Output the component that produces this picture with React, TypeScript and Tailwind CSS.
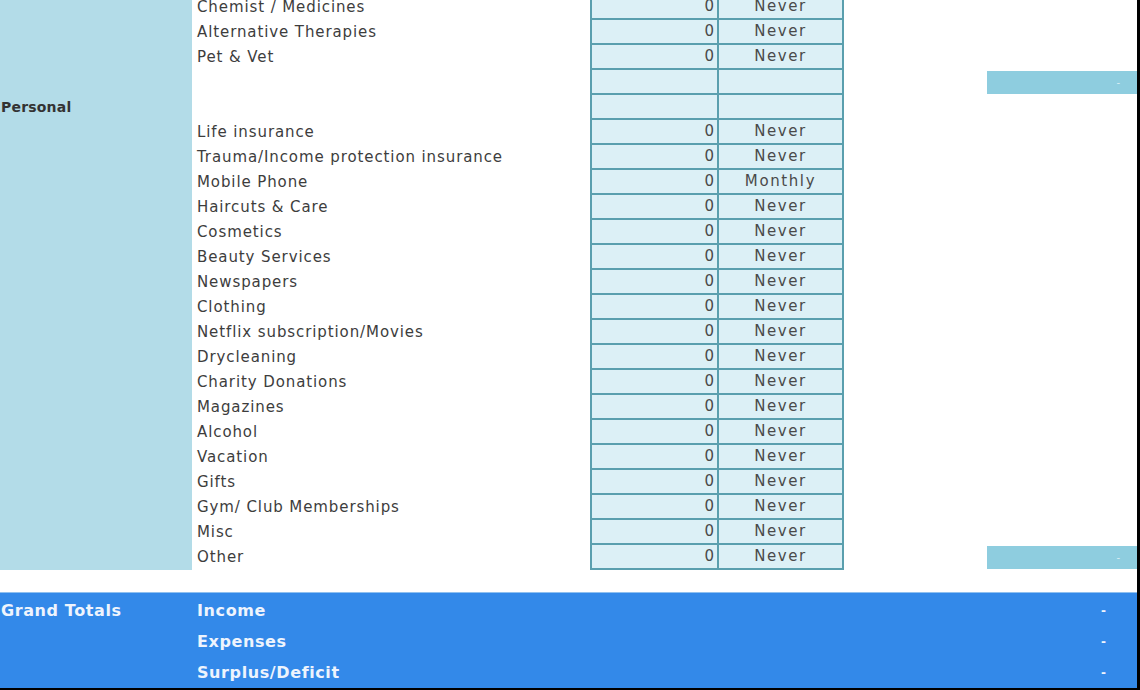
import React from "react";

const rows: (null | [string, string])[] = [
  ["Chemist / Medicines", "Never"],
  ["Alternative Therapies", "Never"],
  ["Pet & Vet", "Never"],
  null,
  null,
  ["Life insurance", "Never"],
  ["Trauma/Income protection insurance", "Never"],
  ["Mobile Phone", "Monthly"],
  ["Haircuts & Care", "Never"],
  ["Cosmetics", "Never"],
  ["Beauty Services", "Never"],
  ["Newspapers", "Never"],
  ["Clothing", "Never"],
  ["Netflix subscription/Movies", "Never"],
  ["Drycleaning", "Never"],
  ["Charity Donations", "Never"],
  ["Magazines", "Never"],
  ["Alcohol", "Never"],
  ["Vacation", "Never"],
  ["Gifts", "Never"],
  ["Gym/ Club Memberships", "Never"],
  ["Misc", "Never"],
  ["Other", "Never"],
];

const font = { fontFamily: '"DejaVu Sans", "Liberation Sans", sans-serif' };

export default function App() {
  return (
    <div
      className="w-[1140px] h-[690px] bg-white overflow-hidden border-r-[3px] border-b-[2px] border-black flex flex-col"
      style={font}
    >
      <div className="mt-[-5px] flex flex-col">
        {rows.map((r, i) => (
          <div key={i} className="flex h-[25px] items-stretch">
            <div className="w-[192px] bg-[#b3dce8] flex items-center text-[14px] font-bold text-[#333] tracking-[0.2px] pl-[1px]">
              {i === 4 ? "Personal" : ""}
            </div>
            <div className="w-[398px] pl-[5px] flex items-center text-[15px] text-[#3d3d3d] tracking-[0.9px] whitespace-nowrap">
              {r ? r[0] : ""}
            </div>
            <div className="w-[127px] bg-[#dcf0f6] border-l-2 border-b-2 border-[#5a9fae] flex items-center justify-end pr-[3px] text-[15px] text-[#4a4a4a]">
              {r ? "0" : ""}
            </div>
            <div className="w-[127px] bg-[#dcf0f6] border-l-2 border-r-2 border-b-2 border-[#5a9fae] flex items-center justify-center text-[15px] tracking-[1.6px] text-[#4a4a4a]">
              {r ? r[1] : ""}
            </div>
            <div className="w-[143px]" />
            <div className="w-[150px] flex items-stretch py-[1px]">
              {i === 3 || i === 22 ? (
                <div className="flex-1 bg-[#8ecddf] flex items-center justify-end pr-[17px] text-[10px] text-[#d8eef4]">
                  -
                </div>
              ) : null}
            </div>
          </div>
        ))}
      </div>
      <div className="h-[25px]" />
      <div className="flex-1 bg-[#3389e9] border-t border-[#8fc0f0] pt-[2px] text-[#eef4fd] font-bold text-[16px] tracking-[0.6px]">
        {[
          ["Grand Totals", "Income"],
          ["", "Expenses"],
          ["", "Surplus/Deficit"],
        ].map(([a, b], i) => (
          <div key={i} className="flex h-[31px] items-center">
            <div className="w-[192px] pl-[1px]">{a}</div>
            <div className="pl-[5px] flex-1">{b}</div>
            <div className="w-[36px] text-[12px]">-</div>
          </div>
        ))}
      </div>
    </div>
  );
}
